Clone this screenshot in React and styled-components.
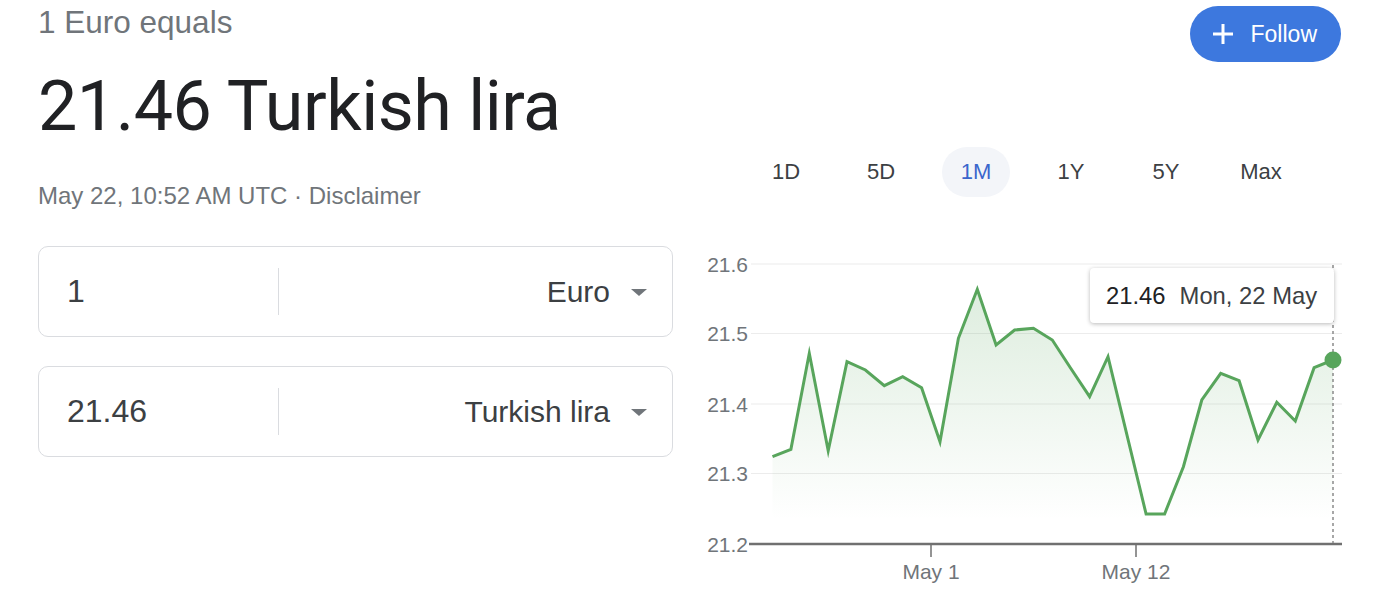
import React from "react";
import styled, { createGlobalStyle } from "styled-components";

const GlobalStyle = createGlobalStyle`
  html, body { margin: 0; padding: 0; background: #fff; }
  body { font-family: "Liberation Sans", Arial, sans-serif; }
  * { box-sizing: border-box; }
`;

const Page = styled.div`
  display: flex;
  width: 1376px;
  height: 602px;
  padding-left: 38px;
  overflow: hidden;
`;

const LeftColumn = styled.div`
  width: 635px;
  flex-shrink: 0;
  display: flex;
  flex-direction: column;
`;

const Subtitle = styled.div`
  margin-top: 4px;
  font-size: 31.5px;
  line-height: 36px;
  color: #70757a;
`;

const Title = styled.div`
  margin-top: 24px;
  font-family: Roboto, "Liberation Sans", sans-serif;
  font-size: 70px;
  letter-spacing: -0.5px;
  line-height: 84px;
  color: #202124;
  white-space: nowrap;
`;

const DateLine = styled.div`
  margin-top: 34px;
  font-size: 24px;
  line-height: 28px;
  color: #70757a;
`;

const Converters = styled.div`
  margin-top: 36px;
  display: flex;
  flex-direction: column;
  gap: 29px;
`;

const ConvBox = styled.div`
  height: 91px;
  border: 1px solid #dadce0;
  border-radius: 10px;
  display: flex;
  align-items: center;
`;

const ValueCell = styled.div`
  width: 240px;
  height: 47px;
  padding-left: 28px;
  border-right: 1px solid #dadce0;
  display: flex;
  align-items: center;
  font-size: 32px;
  color: #3c4043;
`;

const CurrencyCell = styled.div`
  flex: 1;
  display: flex;
  align-items: center;
  justify-content: flex-end;
  padding-right: 25px;
  gap: 21px;
  font-size: 30px;
  color: #3c4043;
`;

const Caret = styled.span`
  width: 0;
  height: 0;
  border-left: 8.5px solid transparent;
  border-right: 8.5px solid transparent;
  border-top: 7px solid #70757a;
  margin-top: 2px;
`;

const RightColumn = styled.div`
  width: 676px;
  flex-shrink: 0;
  display: flex;
  flex-direction: column;
  margin-left: 27px;
`;

const FollowButton = styled.button`
  align-self: flex-end;
  margin-top: 6px;
  margin-right: 35px;
  height: 56px;
  border: none;
  border-radius: 28px;
  background: #3d78de;
  color: #fff;
  display: flex;
  align-items: center;
  gap: 17px;
  padding: 0 24px 0 22px;
  font-family: "Liberation Sans", Arial, sans-serif;
  font-size: 23px;
  cursor: pointer;
`;

const Tabs = styled.div`
  margin-top: 85px;
  margin-left: 52px;
  display: flex;
  gap: 27px;
`;

const Tab = styled.div`
  width: 68px;
  height: 50px;
  border-radius: 25px;
  display: flex;
  align-items: center;
  justify-content: center;
  font-size: 22px;
  color: ${(p) => (p.$active ? "#3a66cc" : "#3c4043")};
  background: ${(p) => (p.$active ? "#f3f5f9" : "transparent")};
`;

const ChartWrap = styled.div`
  position: relative;
  margin-top: 51px;
  width: 650px;
  height: 354px;
`;

const Tooltip = styled.div`
  position: absolute;
  left: 390px;
  top: 20px;
  width: 244px;
  height: 55px;
  background: #fff;
  border-radius: 4px;
  box-shadow: 0 1px 4px rgba(0, 0, 0, 0.28);
  display: flex;
  align-items: center;
  padding-left: 16px;
  gap: 14px;
  font-size: 23.8px;
  white-space: nowrap;
`;

const TipValue = styled.span`
  color: #202124;
`;

const TipDate = styled.span`
  color: #3c4043;
`;

const points = [
  [772.5, 456.7], [790.9, 449.3], [809.3, 353.3], [828.2, 450.7], [847, 361.7],
  [865.4, 370], [884.3, 385.7], [902.7, 376.7], [921.6, 387.7], [940, 441.7],
  [958.4, 338.3], [977.3, 289.3], [996.1, 345], [1014.6, 330], [1033.4, 328.3],
  [1052.3, 340], [1070.7, 368.3], [1089.6, 396.7], [1108, 356.7], [1146.1, 514],
  [1164.6, 514], [1183.4, 466.7], [1201.8, 400], [1220.7, 373.3], [1239.1, 380.7],
  [1258, 440], [1276.8, 402.3], [1295.3, 421], [1314.1, 367.7], [1333, 360],
];

const grid = [
  { y: 264, label: "21.6" },
  { y: 333.5, label: "21.5" },
  { y: 404, label: "21.4" },
  { y: 473.5, label: "21.3" },
];

const FONT = "Liberation Sans, Arial, sans-serif";

function Chart() {
  const line = points.map((p) => p.join(",")).join(" ");
  const area = `M${points[0][0]},544 L${line.split(" ").join(" L")} L${points[points.length - 1][0]},544 Z`;
  return (
    <svg width="650" height="354" viewBox="700 248 650 354" style={{ display: "block" }}>
      <defs>
        <linearGradient id="fillG" x1="0" y1="289" x2="0" y2="520" gradientUnits="userSpaceOnUse">
          <stop offset="0" stopColor="#58a55c" stopOpacity="0.2" />
          <stop offset="1" stopColor="#58a55c" stopOpacity="0" />
        </linearGradient>
      </defs>
      {grid.map((g) => (
        <g key={g.label}>
          <line x1="751" x2="1342" y1={g.y} y2={g.y} stroke="#ececec" strokeWidth="1.2" />
          <text x="748" y={g.y + 7.5} textAnchor="end" fontSize="21" fill="#70757a" fontFamily={FONT}>{g.label}</text>
        </g>
      ))}
      <text x="748" y={551.5} textAnchor="end" fontSize="21" fill="#70757a" fontFamily={FONT}>21.2</text>
      <path d={area} fill="url(#fillG)" />
      <polyline points={line} fill="none" stroke="#58a55c" strokeWidth="3" strokeLinejoin="miter" strokeMiterlimit="10" />
      <line x1="749" x2="1342" y1="544" y2="544" stroke="#707070" strokeWidth="2.5" />
      <line x1="931" x2="931" y1="544" y2="557" stroke="#707070" strokeWidth="1.5" />
      <line x1="1136" x2="1136" y1="544" y2="557" stroke="#707070" strokeWidth="1.5" />
      <text x="931" y="578.5" textAnchor="middle" fontSize="21" fill="#70757a" fontFamily={FONT}>May 1</text>
      <text x="1136" y="578.5" textAnchor="middle" fontSize="21" fill="#70757a" fontFamily={FONT}>May 12</text>
      <line x1="1333" x2="1333" y1="265" y2="543" stroke="#8a8a8a" strokeWidth="1.5" strokeDasharray="3 3" />
      <circle cx="1333" cy="360" r="8.5" fill="#58a55c" />
    </svg>
  );
}

function PlusIcon() {
  return (
    <svg width="22" height="22" viewBox="0 0 22 22">
      <path d="M11 1v20M1 11h20" stroke="#fff" strokeWidth="3" fill="none" />
    </svg>
  );
}

export default function App() {
  const tabs = ["1D", "5D", "1M", "1Y", "5Y", "Max"];
  return (
    <>
      <GlobalStyle />
      <Page>
        <LeftColumn>
          <Subtitle>1 Euro equals</Subtitle>
          <Title>21.46 Turkish lira</Title>
          <DateLine>May 22, 10:52 AM UTC · Disclaimer</DateLine>
          <Converters>
            <ConvBox>
              <ValueCell>1</ValueCell>
              <CurrencyCell>
                Euro
                <Caret />
              </CurrencyCell>
            </ConvBox>
            <ConvBox>
              <ValueCell>21.46</ValueCell>
              <CurrencyCell>
                Turkish lira
                <Caret />
              </CurrencyCell>
            </ConvBox>
          </Converters>
        </LeftColumn>
        <RightColumn>
          <FollowButton>
            <PlusIcon />
            Follow
          </FollowButton>
          <Tabs>
            {tabs.map((t) => (
              <Tab key={t} $active={t === "1M"}>{t}</Tab>
            ))}
          </Tabs>
          <ChartWrap>
            <Chart />
            <Tooltip>
              <TipValue>21.46</TipValue>
              <TipDate>Mon, 22 May</TipDate>
            </Tooltip>
          </ChartWrap>
        </RightColumn>
      </Page>
    </>
  );
}
